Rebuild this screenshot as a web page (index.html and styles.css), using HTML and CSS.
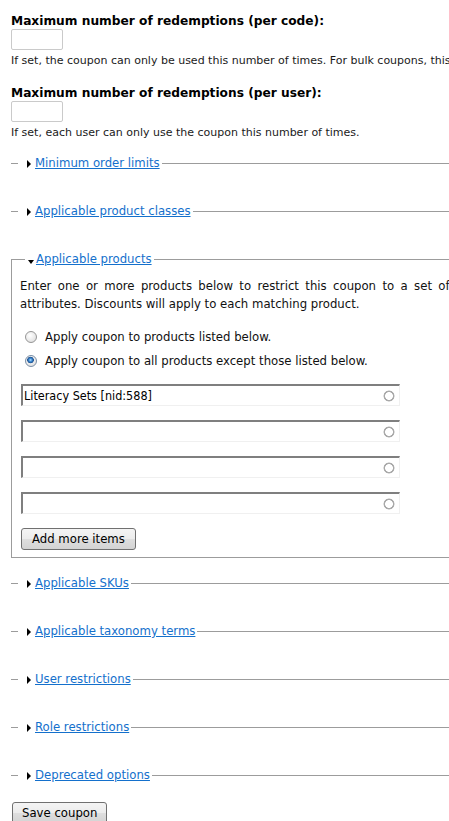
FILE: index.html
```html
<!DOCTYPE html>
<html lang="en">
<head>
<meta charset="utf-8">
<title>Coupon</title>
<link rel="stylesheet" href="styles.css">
</head>
<body>
<form class="coupon-form">
  <div class="form-item">
    <label class="item-label" for="max-code">Maximum number of redemptions (per code):</label>
    <input class="text-small" id="max-code" type="text">
    <div class="description">If set, the coupon can only be used this number of times. For bulk coupons, this applies to each available code.</div>
  </div>
  <div class="form-item form-item-next">
    <label class="item-label" for="max-user">Maximum number of redemptions (per user):</label>
    <input class="text-small" id="max-user" type="text">
    <div class="description">If set, each user can only use the coupon this number of times.</div>
  </div>

  <fieldset class="collapsible collapsed first">
    <legend><span class="arrow"></span><a href="#">Minimum order limits</a></legend>
  </fieldset>
  <fieldset class="collapsible collapsed">
    <legend><span class="arrow"></span><a href="#">Applicable product classes</a></legend>
  </fieldset>

  <fieldset class="collapsible expanded">
    <legend><span class="arrow"></span><a href="#">Applicable products</a></legend>
    <p class="intro">Enter one or more products below to restrict this coupon to a set of products, regardless of any product attributes. Discounts will apply to each matching product.</p>
    <div class="radios">
      <label class="radio"><input type="radio" name="negate" value="0"><span>Apply coupon to products listed below.</span></label>
      <label class="radio"><input type="radio" name="negate" value="1" checked><span>Apply coupon to all products except those listed below.</span></label>
    </div>
    <div class="autocomplete-list">
      <input class="autocomplete" type="text" value="Literacy Sets [nid:588]">
      <input class="autocomplete" type="text">
      <input class="autocomplete" type="text">
      <input class="autocomplete" type="text">
    </div>
    <button type="button" class="btn btn-add">Add more items</button>
  </fieldset>

  <fieldset class="collapsible collapsed after-expanded">
    <legend><span class="arrow"></span><a href="#">Applicable SKUs</a></legend>
  </fieldset>
  <fieldset class="collapsible collapsed">
    <legend><span class="arrow"></span><a href="#">Applicable taxonomy terms</a></legend>
  </fieldset>
  <fieldset class="collapsible collapsed">
    <legend><span class="arrow"></span><a href="#">User restrictions</a></legend>
  </fieldset>
  <fieldset class="collapsible collapsed">
    <legend><span class="arrow"></span><a href="#">Role restrictions</a></legend>
  </fieldset>
  <fieldset class="collapsible collapsed">
    <legend><span class="arrow"></span><a href="#">Deprecated options</a></legend>
  </fieldset>

  <button type="submit" class="btn btn-save">Save coupon</button>
</form>
</body>
</html>
```

FILE: styles.css
```css
html {
  overflow: hidden;
  background: #fff;
}

body {
  margin: 0;
  font-family: "DejaVu Sans", Verdana, sans-serif;
  color: #000;
}

.coupon-form {
  width: 730px;
  padding: 13px 0 0 11px;
}

.item-label {
  display: block;
  font-weight: bold;
  font-size: 12.2px;
  line-height: 16px;
}

.text-small {
  display: block;
  box-sizing: border-box;
  width: 52px;
  height: 21px;
  margin: 0;
  padding: 2px;
  border: 1px solid #cacaca;
  border-radius: 2px;
  background: #fff;
  font: 12px "DejaVu Sans", sans-serif;
}

.description {
  margin-top: 4px;
  font-size: 11px;
  line-height: 14px;
  color: #1a1a1a;
  white-space: nowrap;
}

.form-item-next {
  margin-top: 17px;
}

fieldset {
  margin: 16px 0 0;
  min-width: 0;
  border: 0;
  border-top: 1px solid #9c9c9c;
  padding: 0 0 16px 0;
}

fieldset.first {
  margin-top: 15px;
}

fieldset.after-expanded {
  margin-top: 17px;
}

legend {
  font: 13px/16px "DejaVu Sans Condensed", "DejaVu Sans", sans-serif;
  margin-left: 7px;
  padding: 0 2px 0 9px;
}

legend a {
  color: #1470cc;
  text-decoration: underline;
}

.arrow {
  display: inline-block;
  width: 0;
  height: 0;
  margin-right: 4px;
  vertical-align: middle;
  border-style: solid;
  border-color: transparent transparent transparent #000;
  border-width: 4px 0 4px 4px;
}

.expanded {
  border: 1px solid #9c9c9c;
  padding: 0 8px 7px 8px;
}

.expanded legend {
  margin-left: 5px;
  padding: 0 2px 0 3px;
}

.expanded .arrow {
  border-color: #000 transparent transparent transparent;
  border-width: 4px 3.5px 0 3.5px;
  margin-right: 2px;
  vertical-align: -1px;
}

.intro {
  margin: 10px 0 0;
  max-width: 655px;
  font: 13px/18px "DejaVu Sans Condensed", "DejaVu Sans", sans-serif;
  color: #111;
  text-align: justify;
}

.radios {
  margin-top: 12px;
}

.radio {
  display: flex;
  align-items: center;
  height: 24px;
  font: 13px/16px "DejaVu Sans Condensed", "DejaVu Sans", sans-serif;
  color: #111;
}

.radio input {
  appearance: none;
  -webkit-appearance: none;
  box-sizing: border-box;
  width: 12px;
  height: 12px;
  margin: 0 8px 0 5px;
  border: 1px solid #969696;
  border-radius: 50%;
  background: radial-gradient(circle at 40% 35%, #ffffff 0, #e8e8e8 60%, #d4d4d4 100%);
}

.radio input:checked {
  border-color: #7a8ea6;
  background:
    radial-gradient(circle at 45% 40%, #bfe2ff 0, #3f8fd8 1.5px, #1d4f8e 3px, rgba(29, 79, 142, 0) 3.6px),
    radial-gradient(circle at 40% 35%, #ffffff 0, #e8e8e8 60%, #d4d4d4 100%);
}

.autocomplete-list {
  display: flex;
  flex-direction: column;
  gap: 14px;
  margin-top: 11px;
}

.autocomplete {
  display: block;
  box-sizing: border-box;
  width: 379px;
  height: 22px;
  margin: 0 0 0 1px;
  padding: 0 18px 0 1px;
  border-style: solid;
  border-width: 2px 1px 1px 2px;
  border-color: #7f7f7f #f0f0f0 #f0f0f0 #7f7f7f;
  font: 12.5px "DejaVu Sans Condensed", "DejaVu Sans", sans-serif;
  color: #000;
  background:
    radial-gradient(circle closest-side, rgba(168, 168, 168, 0) 3.6px, #a9a9a9 4.2px, #a9a9a9 5.1px, rgba(168, 168, 168, 0) 5.8px) no-repeat right 4px center / 12px 12px,
    #fff;
}

.btn {
  display: block;
  box-sizing: border-box;
  height: 22px;
  padding: 0 10px;
  border: 1px solid #707070;
  border-radius: 3px;
  background: linear-gradient(#f4f4f4 0%, #ececec 48%, #dedede 52%, #d3d3d3 100%);
  font: 13px/20px "DejaVu Sans Condensed", "DejaVu Sans", sans-serif;
  color: #000;
}

.btn-add {
  margin: 14px 0 0 1px;
}

.btn-save {
  margin: 3px 0 0 1px;
  padding: 0 9px;
}
```
